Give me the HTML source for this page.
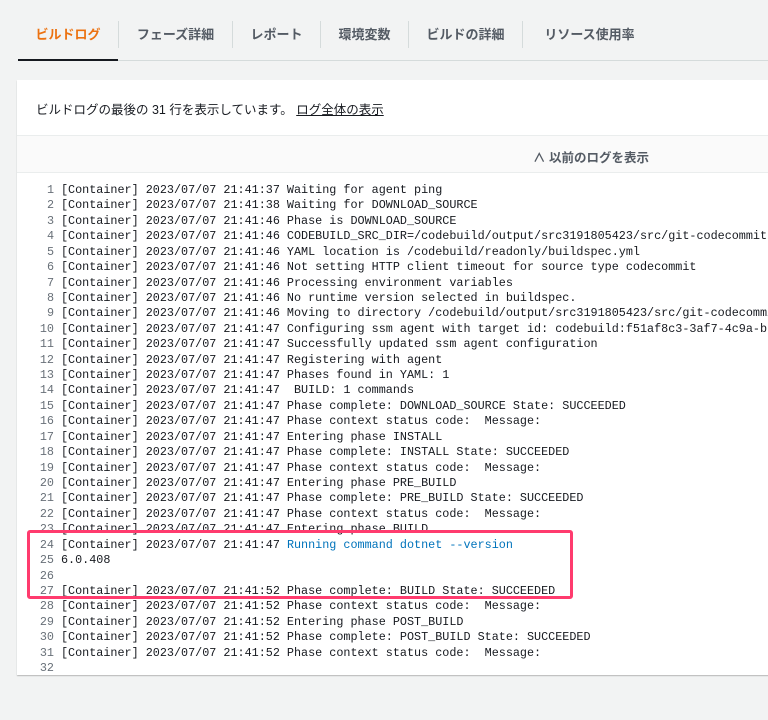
<!DOCTYPE html>
<html><head><meta charset="utf-8"><style>
body{margin:0;width:768px;height:720px;background:#f2f3f3;font-family:"Liberation Sans","Noto Sans CJK JP",sans-serif;overflow:hidden;position:relative}
.tabs{position:absolute;top:0;left:18px;right:0;height:60px;border-bottom:1px solid #d5dbdb}
.tab{position:absolute;top:0;height:60px;line-height:69px;font-size:13px;font-weight:bold;color:#545b64;text-align:center}
.sep{position:absolute;top:21px;width:1px;height:27px;background:#d5dbdb}
.panel{position:absolute;left:17px;top:80px;width:760px;height:595px;background:#fff;box-shadow:0 1px 1px rgba(0,0,0,.25)}
.hdr{position:absolute;left:0;right:0;top:0;height:55px;border-bottom:1px solid #eaeded;font-size:12.5px;color:#16191f}
.hdr span{position:absolute;left:19px;top:19px}
.more{position:absolute;left:0;right:0;top:56px;height:36px;background:#fafafa;border-bottom:1px solid #eaeded;font-size:12.5px;font-weight:bold;color:#545b64}
.log{position:absolute;left:0;top:103px;font-family:"Liberation Mono",monospace;font-size:11.78px;line-height:15.42px;white-space:pre;color:#16191f}
.l{display:block}
.n{display:inline-block;width:37px;text-align:right;color:#687078;padding-right:7px}
.b{color:#0073bb}
.box{position:absolute;left:27px;top:530px;width:540px;height:63px;border:3px solid #ff3b6e;border-radius:3px}
</style></head><body>
<div class="tabs">
<div class="tab" style="left:0;width:100px;color:#ec7211;border-bottom:2px solid #16191f;height:59px">ビルドログ</div>
<div class="sep" style="left:100px"></div>
<div class="tab" style="left:101px;width:113px">フェーズ詳細</div>
<div class="sep" style="left:214px"></div>
<div class="tab" style="left:215px;width:87px">レポート</div>
<div class="sep" style="left:302px"></div>
<div class="tab" style="left:303px;width:87px">環境変数</div>
<div class="sep" style="left:390px"></div>
<div class="tab" style="left:391px;width:113px">ビルドの詳細</div>
<div class="sep" style="left:504px"></div>
<div class="tab" style="left:515px;width:113px">リソース使用率</div>
</div>
<div class="panel">
<div class="hdr"><span>ビルドログの最後の 31 行を表示しています。 <u>ログ全体の表示</u></span></div>
<div class="more"><span style="position:absolute;left:516px;top:11px">∧ 以前のログを表示</span></div>
<div class="log"><span class="l"><span class="n">1</span>[Container] 2023/07/07 21:41:37 Waiting for agent ping</span><span class="l"><span class="n">2</span>[Container] 2023/07/07 21:41:38 Waiting for DOWNLOAD_SOURCE</span><span class="l"><span class="n">3</span>[Container] 2023/07/07 21:41:46 Phase is DOWNLOAD_SOURCE</span><span class="l"><span class="n">4</span>[Container] 2023/07/07 21:41:46 CODEBUILD_SRC_DIR=/codebuild/output/src3191805423/src/git-codecommit</span><span class="l"><span class="n">5</span>[Container] 2023/07/07 21:41:46 YAML location is /codebuild/readonly/buildspec.yml</span><span class="l"><span class="n">6</span>[Container] 2023/07/07 21:41:46 Not setting HTTP client timeout for source type codecommit</span><span class="l"><span class="n">7</span>[Container] 2023/07/07 21:41:46 Processing environment variables</span><span class="l"><span class="n">8</span>[Container] 2023/07/07 21:41:46 No runtime version selected in buildspec.</span><span class="l"><span class="n">9</span>[Container] 2023/07/07 21:41:46 Moving to directory /codebuild/output/src3191805423/src/git-codecommit</span><span class="l"><span class="n">10</span>[Container] 2023/07/07 21:41:47 Configuring ssm agent with target id: codebuild:f51af8c3-3af7-4c9a-b</span><span class="l"><span class="n">11</span>[Container] 2023/07/07 21:41:47 Successfully updated ssm agent configuration</span><span class="l"><span class="n">12</span>[Container] 2023/07/07 21:41:47 Registering with agent</span><span class="l"><span class="n">13</span>[Container] 2023/07/07 21:41:47 Phases found in YAML: 1</span><span class="l"><span class="n">14</span>[Container] 2023/07/07 21:41:47  BUILD: 1 commands</span><span class="l"><span class="n">15</span>[Container] 2023/07/07 21:41:47 Phase complete: DOWNLOAD_SOURCE State: SUCCEEDED</span><span class="l"><span class="n">16</span>[Container] 2023/07/07 21:41:47 Phase context status code:  Message:</span><span class="l"><span class="n">17</span>[Container] 2023/07/07 21:41:47 Entering phase INSTALL</span><span class="l"><span class="n">18</span>[Container] 2023/07/07 21:41:47 Phase complete: INSTALL State: SUCCEEDED</span><span class="l"><span class="n">19</span>[Container] 2023/07/07 21:41:47 Phase context status code:  Message:</span><span class="l"><span class="n">20</span>[Container] 2023/07/07 21:41:47 Entering phase PRE_BUILD</span><span class="l"><span class="n">21</span>[Container] 2023/07/07 21:41:47 Phase complete: PRE_BUILD State: SUCCEEDED</span><span class="l"><span class="n">22</span>[Container] 2023/07/07 21:41:47 Phase context status code:  Message:</span><span class="l"><span class="n">23</span>[Container] 2023/07/07 21:41:47 Entering phase BUILD</span><span class="l"><span class="n">24</span>[Container] 2023/07/07 21:41:47 <span class="b">Running command dotnet --version</span></span><span class="l"><span class="n">25</span>6.0.408</span><span class="l"><span class="n">26</span></span><span class="l"><span class="n">27</span>[Container] 2023/07/07 21:41:52 Phase complete: BUILD State: SUCCEEDED</span><span class="l"><span class="n">28</span>[Container] 2023/07/07 21:41:52 Phase context status code:  Message:</span><span class="l"><span class="n">29</span>[Container] 2023/07/07 21:41:52 Entering phase POST_BUILD</span><span class="l"><span class="n">30</span>[Container] 2023/07/07 21:41:52 Phase complete: POST_BUILD State: SUCCEEDED</span><span class="l"><span class="n">31</span>[Container] 2023/07/07 21:41:52 Phase context status code:  Message:</span><span class="l"><span class="n">32</span></span></div>
</div>
<div class="box"></div>
</body></html>
